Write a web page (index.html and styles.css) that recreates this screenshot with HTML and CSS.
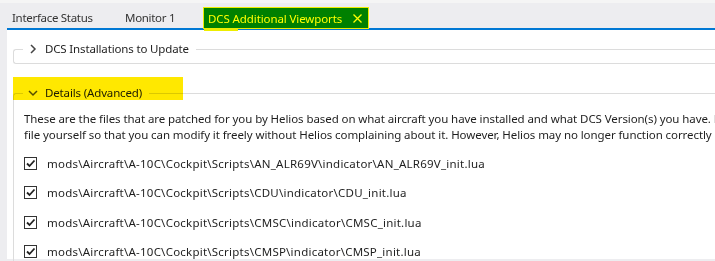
FILE: index.html
```html
<!DOCTYPE html>
<html>
<head>
<meta charset="utf-8">
<link rel="stylesheet" href="styles.css">
</head>
<body>
<div class="topstrip"></div>
<div class="tabs">
  <div class="tab tab-first">Interface Status</div>
  <div class="tab tab-second">Monitor 1</div>
  <div class="tab tab-active">DCS Additional Viewports
    <svg class="close" width="9" height="9" viewBox="0 0 9 9"><path d="M0.5 0.5 L8.5 8.5 M8.5 0.5 L0.5 8.5" stroke="#ffff00" stroke-width="1.3" fill="none"/></svg>
  </div>
</div>
<div class="pane">
  <fieldset class="group group-collapsed">
    <legend class="legend">
      <svg class="chev" width="10" height="10" viewBox="0 0 10 10"><path d="M3 1 L7 5 L3 9" stroke="#444" stroke-width="1.5" fill="none"/></svg>
      <span>DCS Installations to Update</span>
    </legend>
  </fieldset>
  <div class="details-wrap">
    <div class="marker"></div>
    <fieldset class="group group-open">
      <legend class="legend">
        <svg class="chev" width="10" height="10" viewBox="0 0 10 10"><path d="M1 3 L5 7 L9 3" stroke="#555" stroke-width="1.5" fill="none"/></svg>
        <span>Details (Advanced)</span>
      </legend>
      <div class="details-body">
        <p class="desc">These are the files that are patched for you by Helios based on what aircraft you have installed and what DCS Version(s) you have. Deselect a file to take control of that<br>file yourself so that you can modify it freely without Helios complaining about it. However, Helios may no longer function correctly if you do so.</p>
        <ul class="files">
          <li class="file"><span class="check"><svg width="11" height="11" viewBox="0 0 11 11"><path d="M2 5.5 L4.5 8 L9.5 2.5" stroke="#222" stroke-width="1.8" fill="none"/></svg></span>mods\Aircraft\A-10C\Cockpit\Scripts\AN_ALR69V\indicator\AN_ALR69V_init.lua</li>
          <li class="file"><span class="check"><svg width="11" height="11" viewBox="0 0 11 11"><path d="M2 5.5 L4.5 8 L9.5 2.5" stroke="#222" stroke-width="1.8" fill="none"/></svg></span>mods\Aircraft\A-10C\Cockpit\Scripts\CDU\indicator\CDU_init.lua</li>
          <li class="file"><span class="check"><svg width="11" height="11" viewBox="0 0 11 11"><path d="M2 5.5 L4.5 8 L9.5 2.5" stroke="#222" stroke-width="1.8" fill="none"/></svg></span>mods\Aircraft\A-10C\Cockpit\Scripts\CMSC\indicator\CMSC_init.lua</li>
          <li class="file"><span class="check"><svg width="11" height="11" viewBox="0 0 11 11"><path d="M2 5.5 L4.5 8 L9.5 2.5" stroke="#222" stroke-width="1.8" fill="none"/></svg></span>mods\Aircraft\A-10C\Cockpit\Scripts\CMSP\indicator\CMSP_init.lua</li>
        </ul>
      </div>
    </fieldset>
  </div>
</div>
</body>
</html>
```
FILE: styles.css
```css
html, body {
  margin: 0;
  padding: 0;
  width: 715px;
  height: 261px;
  overflow: hidden;
  background: #ededf0;
  font-family: "Noto Sans", "Open Sans", sans-serif;
  font-size: 11.5px;
  color: #1e1e1e;
}
.topstrip {
  height: 3px;
  background: #f5f5f5;
}
.tabs {
  display: flex;
  align-items: flex-end;
  height: 25px;
  padding-left: 12px;
}
.tab {
  height: 20px;
  line-height: 19px;
  color: #333;
  white-space: nowrap;
  letter-spacing: -0.3px;
}
.tab-first {
  width: 113px;
}
.tab-second {
  width: 79px;
}
.tab-active {
  background: #008000;
  color: #ffff00;
  box-shadow: 0 0 0 1px #eded00;
  display: flex;
  align-items: center;
  gap: 9px;
  padding: 0 6px 0 4px;
  width: 164px;
  box-sizing: border-box;
  letter-spacing: -0.1px;
  position: relative;
}
.tab-active::after {
  content: "";
  position: absolute;
  left: 0;
  bottom: -3px;
  width: 34px;
  height: 3px;
  background: #eded00;
}
.close {
  display: block;
  margin-left: auto;
}
.pane {
  margin-left: 7px;
  border-top: 2px solid #0078d4;
  background: #fff;
  height: 231px;
  padding: 11px 0 0 6px;
  box-sizing: border-box;
  width: 760px;
}
.group {
  margin: 0;
  border: 1px solid #dcdcdc;
  border-right: none;
  border-radius: 3px 0 0 3px;
  padding: 0;
  min-width: 0;
}
.group-collapsed {
  padding-bottom: 6px;
}
.legend {
  display: flex;
  align-items: center;
  margin-left: 9px;
  padding: 0 7px 0 5px;
  line-height: 16px;
  height: 16px;
  gap: 7px;
  white-space: nowrap;
  letter-spacing: -0.15px;
}
.chev {
  display: block;
}
.details-wrap {
  position: relative;
  margin-top: 21px;
}
.marker {
  position: absolute;
  left: 0;
  top: -8px;
  width: 170px;
  height: 23px;
  background: #ffe800;
  mix-blend-mode: multiply;
  z-index: 2;
  pointer-events: none;
}
.group-open {
  border-bottom: none;
  height: 200px;
}
.details-body {
  padding-left: 10px;
}
.desc {
  margin: 10px 0 0 0;
  line-height: 16px;
  white-space: nowrap;
  color: #1e1e1e;
  letter-spacing: -0.08px;
}
.files {
  list-style: none;
  margin: 6px 0 0 0;
  padding: 0;
}
.file {
  height: 29.33px;
  display: flex;
  align-items: center;
  white-space: nowrap;
  letter-spacing: 0.23px;
}
.check {
  width: 11px;
  height: 11px;
  border: 1px solid #333;
  margin-right: 10px;
  display: flex;
  align-items: center;
  justify-content: center;
  background: #fff;
}
.check svg {
  display: block;
}
```
